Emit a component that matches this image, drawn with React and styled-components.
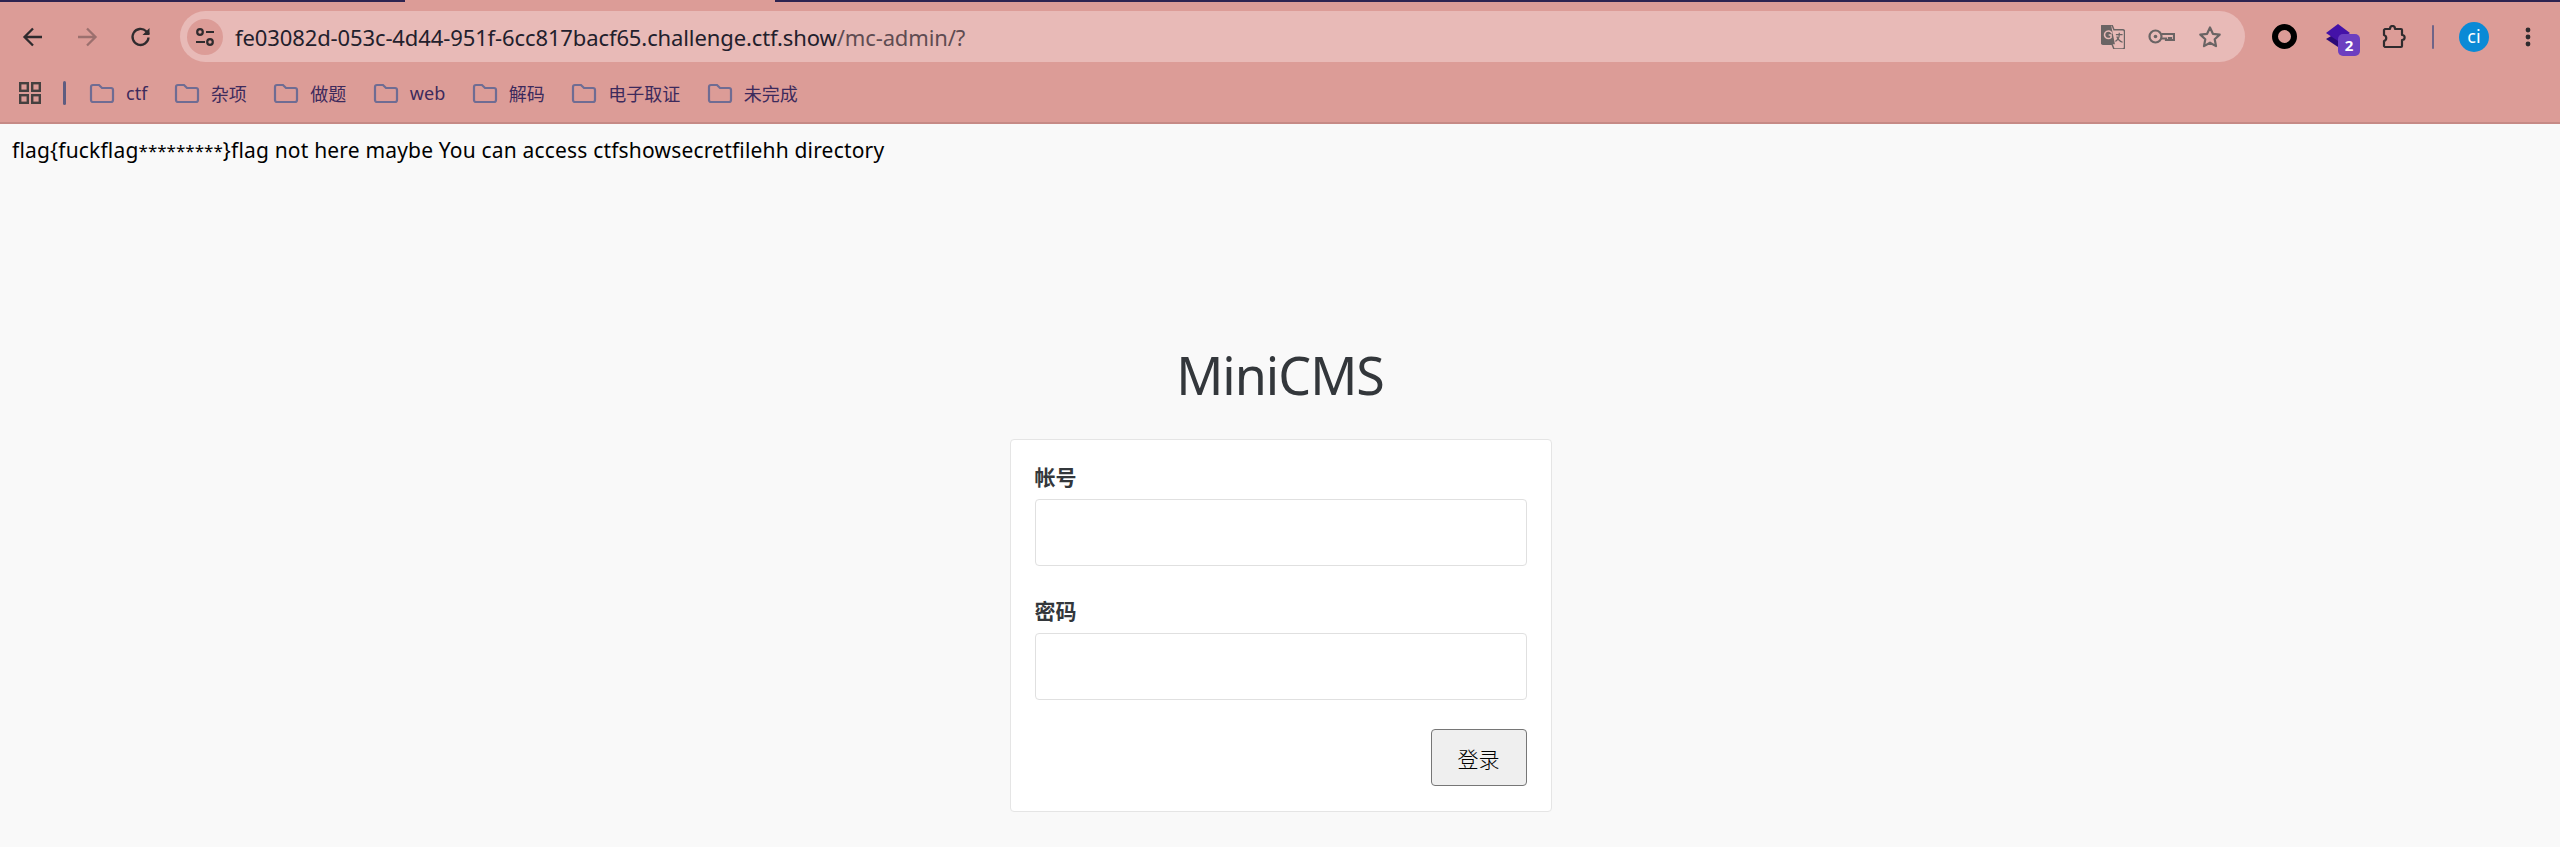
import React from "react";
import styled, { createGlobalStyle } from "styled-components";

const GlobalStyle = createGlobalStyle`
  html, body {
    margin: 0;
    padding: 0;
    height: 100%;
    background: #f9f9f9;
    overflow: hidden;
  }
  * {
    box-sizing: border-box;
  }
`;

const sans = `"Noto Sans", "Noto Sans CJK SC", sans-serif`;

// browser chrome
const Chrome = styled.header`
  height: 124px;
  background: #dc9c97;
  border-bottom: 2px solid #c68a86;
  font-family: ${sans};
`;

const TabEdge = styled.div`
  display: flex;
  height: 2px;
`;

const TabEdgePart = styled.div`
  width: ${(p) => p.$width || "auto"};
  flex: ${(p) => (p.$width ? "none" : 1)};
  background: ${(p) => (p.$active ? "transparent" : "#2e2350")};
`;

const Toolbar = styled.div`
  display: flex;
  align-items: center;
  height: 60px;
  padding: 9px 0 0 21px;
`;

const NavIcon = styled.svg`
  width: 24px;
  height: 24px;
  flex: none;
  margin-right: 30px;
  fill: none;
  stroke: ${(p) => (p.$off ? "#9c706e" : "#2f2b2e")};
  stroke-width: 2.3;
`;

const Omnibox = styled.div`
  display: flex;
  align-items: center;
  width: 2065px;
  height: 51px;
  flex: none;
  margin-left: -3px;
  padding: 0 23px 0 7px;
  border-radius: 26px;
  background: #e8bab7;
`;

const SiteChip = styled.div`
  display: flex;
  align-items: center;
  justify-content: center;
  width: 36px;
  height: 36px;
  flex: none;
  border-radius: 50%;
  background: #dc9c97;
`;

const Url = styled.div`
  flex: 1;
  margin-left: 12px;
  font-size: 22px;
  letter-spacing: -0.11px;
  white-space: nowrap;
  color: #22202c;
`;

const UrlPath = styled.span`
  color: #5f4c52;
`;

const BoxIcons = styled.div`
  display: flex;
  align-items: center;
  gap: 23px;
`;

const GreyIcon = styled.svg`
  display: block;
  width: ${(p) => p.$w || 24}px;
  height: ${(p) => p.$h || 24}px;
  fill: none;
  stroke: #6a6464;
  stroke-width: 2.2;
`;

const Extensions = styled.div`
  display: flex;
  align-items: center;
  margin-left: 27px;
`;

const RingIcon = styled.div`
  width: 25px;
  height: 25px;
  border: 6px solid #000;
  border-radius: 50%;
  margin-right: 29px;
`;

const StackIcon = styled.div`
  position: relative;
  width: 24px;
  height: 26px;
  margin-right: 32px;
`;

const Badge = styled.span`
  position: absolute;
  left: 12px;
  top: 10px;
  width: 22px;
  height: 22px;
  border-radius: 5px;
  background: #6c3fc0;
  color: #fff;
  font-size: 15px;
  font-weight: 700;
  line-height: 22px;
  text-align: center;
`;

const ToolbarRule = styled.div`
  width: 2px;
  height: 24px;
  margin: 0 25px 0 26px;
  border-radius: 1px;
  background: #6f6488;
`;

const Avatar = styled.div`
  width: 30px;
  height: 30px;
  border-radius: 50%;
  background: #0a8ad6;
  color: #fff;
  font-size: 18px;
  line-height: 29px;
  text-align: center;
`;

const Kebab = styled.svg`
  width: 6px;
  height: 20px;
  margin-left: 36px;
  fill: #2f2b2e;
`;

const BookmarkBar = styled.nav`
  display: flex;
  align-items: center;
  height: 60px;
  padding: 1px 0 0 19px;
`;

const AppsIcon = styled.svg`
  width: 22px;
  height: 22px;
  flex: none;
  fill: none;
  stroke: #45403f;
  stroke-width: 2.4;
`;

const BarRule = styled.div`
  width: 3px;
  height: 24px;
  margin: 0 23px 0 22px;
  border-radius: 2px;
  background: #5f5c80;
`;

const Bookmark = styled.a`
  display: flex;
  align-items: center;
  gap: 11px;
  margin-right: 26.500px;
  font-size: 18px;
  color: #3d2a5c;
`;

const FolderIcon = styled.svg`
  width: 26px;
  height: 22px;
  flex: none;
  fill: none;
  stroke: #6f6c93;
  stroke-width: 2.2;
`;

// page content
const Notice = styled.div`
  padding: 12px 12px 0;
  font-family: ${sans};
  font-size: 21px;
  letter-spacing: 0.18px;
  line-height: 29px;
  color: #000;
`;

const Stars = styled.span`
  font-size: 17px;
  letter-spacing: 0;
  vertical-align: 1px;
`;

const Login = styled.main`
  display: flex;
  flex-direction: column;
  align-items: center;
  padding-top: 174px;
  font-family: ${sans};
`;

const Title = styled.h1`
  margin: 0 0 28px;
  font-size: 52px;
  font-weight: 400;
  letter-spacing: -1px;
  line-height: 72px;
  color: #33373b;
`;

const Card = styled.form`
  display: flex;
  flex-direction: column;
  width: 542px;
  height: 373px;
  margin-left: 1px;
  padding: 22px 24px 0;
  border: 1px solid #e5e5e5;
  border-radius: 4px;
  background: #fff;
`;

const Field = styled.div`
  display: flex;
  flex-direction: column;
  margin-bottom: 30px;
`;

const Label = styled.label`
  height: 37px;
  padding-top: 1px;
  font-size: 21px;
  font-weight: 700;
  line-height: 28px;
  color: #33373b;
`;

const Input = styled.input`
  width: 100%;
  height: 67px;
  border: 1px solid #e0e0e0;
  border-radius: 4px;
  background: #fff;
`;

const Actions = styled.div`
  display: flex;
  justify-content: flex-end;
`;

const Submit = styled.button`
  width: 96px;
  height: 57px;
  margin-top: -1px;
  border: 1.500px solid #767676;
  border-radius: 4px;
  background: #efefef;
  font-family: "Noto Sans CJK SC", sans-serif;
  font-size: 21px;
  font-weight: 300;
  color: #000;
`;

const Folder = () => (
  <FolderIcon viewBox="0 0 26 22">
    <path d="M2 5a2 2 0 0 1 2-2h6l3 3h9a2 2 0 0 1 2 2v10a2 2 0 0 1-2 2H4a2 2 0 0 1-2-2z" />
  </FolderIcon>
);

const bookmarks = ["ctf", "杂项", "做题", "web", "解码", "电子取证", "未完成"];

const App = () => {
  return (
    <>
      <GlobalStyle />
      <Chrome>
        <TabEdge>
          <TabEdgePart $width="405px" />
          <TabEdgePart $width="370px" $active />
          <TabEdgePart />
        </TabEdge>
        <Toolbar>
          <NavIcon viewBox="0 0 24 24">
            <path d="M21 12H4M12 3.500 3.500 12l8.500 8.500" />
          </NavIcon>
          <NavIcon viewBox="0 0 24 24" $off>
            <path d="M3 12h17M12 3.500l8.500 8.500-8.500 8.500" />
          </NavIcon>
          <NavIcon viewBox="0 0 24 24">
            <path d="M19.500 12.500a8 8 0 1 1-2.300-6.200L20 9" />
            <path d="M20.500 3v7h-7" fill="#2f2b2e" stroke="none" />
          </NavIcon>
          <Omnibox>
            <SiteChip>
              <svg width="20" height="20" viewBox="0 0 20 20" fill="none" stroke="#2f2b2e" strokeWidth="2.200">
                <circle cx="5" cy="5" r="2.800" />
                <path d="M11 5h8M1 15h9" />
                <circle cx="15" cy="15" r="2.800" />
              </svg>
            </SiteChip>
            <Url>
              fe03082d-053c-4d44-951f-6cc817bacf65.challenge.ctf.show<UrlPath>/mc-admin/?</UrlPath>
            </Url>
            <BoxIcons>
              <GreyIcon viewBox="0 0 24 25">
                <path d="M2 0h9l2 5h9a2 2 0 0 1 2 2v16a2 2 0 0 1-2 2H13l-2-5H2a2 2 0 0 1-2-2V2a2 2 0 0 1 2-2z" fill="#e8bab7" strokeWidth="1.500" />
                <path d="M1.500 0H10l4 20H1.500A1.500 1.500 0 0 1 0 18.500V1.500A1.500 1.500 0 0 1 1.500 0z" fill="#6a6464" stroke="none" />
                <path d="M11 9a4 4 0 1 0-1 4V10.500H7.500" stroke="#e8bab7" strokeWidth="1.600" />
                <path d="M15 10h7M18.500 8v2c0 4-2 6-4 7M16 12c1 3 3 5 6 6" strokeWidth="1.300" />
              </GreyIcon>
              <GreyIcon viewBox="0 0 27 15" $w={27} $h={15}>
                <circle cx="7.500" cy="7.500" r="6" />
                <circle cx="7.500" cy="7.500" r="1.800" fill="#6a6464" stroke="none" />
                <path d="M13.500 5H26v6h-3V9h-2v2h-3V9.500h-4.500" />
              </GreyIcon>
              <GreyIcon viewBox="0 0 24 24">
                <path d="m12 2.500 2.900 6.300 6.800.8-5 4.700 1.300 6.800-6-3.400-6 3.400 1.300-6.800-5-4.700 6.800-.8z" strokeLinejoin="round" />
              </GreyIcon>
            </BoxIcons>
          </Omnibox>
          <Extensions>
            <RingIcon />
            <StackIcon>
              <svg width="24" height="26" viewBox="0 0 24 26">
                <path d="M0 15 12 8l12 7-12 8z" fill="#2c0a78" />
                <path d="M0 9 12 0l12 9-12 8z" fill="#4412a8" />
              </svg>
              <Badge>2</Badge>
            </StackIcon>
            <svg width="24" height="24" viewBox="0 0 24 24" fill="none" stroke="#2f2b2e" strokeWidth="2.200">
              <path d="M3 4h5c0-4 5-4 5 0h6a1 1 0 0 1 1 1v5c3.500 0 3.500 5 0 5v6a1 1 0 0 1-1 1H3l-1-1v-5c3-1 3-5 0-6V5z" strokeLinejoin="round" />
            </svg>
            <ToolbarRule />
            <Avatar>ci</Avatar>
            <Kebab viewBox="0 0 6 20">
              <circle cx="3" cy="3" r="2.400" />
              <circle cx="3" cy="10" r="2.400" />
              <circle cx="3" cy="17" r="2.400" />
            </Kebab>
          </Extensions>
        </Toolbar>
        <BookmarkBar>
          <AppsIcon viewBox="0 0 22 22">
            <rect x="1.200" y="1.200" width="7.600" height="7.600" />
            <rect x="13.200" y="1.200" width="7.600" height="7.600" />
            <rect x="1.200" y="13.200" width="7.600" height="7.600" />
            <rect x="13.200" y="13.200" width="7.600" height="7.600" />
          </AppsIcon>
          <BarRule />
          {bookmarks.map((name) => (
            <Bookmark key={name}>
              <Folder />
              {name}
            </Bookmark>
          ))}
        </BookmarkBar>
      </Chrome>
      <Notice>
        flag{"{"}fuckflag<Stars>*********</Stars>
        {"}"}flag not here maybe You can access ctfshowsecretfilehh directory
      </Notice>
      <Login>
        <Title>MiniCMS</Title>
        <Card>
          <Field>
            <Label>帐号</Label>
            <Input type="text" />
          </Field>
          <Field>
            <Label>密码</Label>
            <Input type="password" />
          </Field>
          <Actions>
            <Submit type="button">登录</Submit>
          </Actions>
        </Card>
      </Login>
    </>
  );
};

export default App;
